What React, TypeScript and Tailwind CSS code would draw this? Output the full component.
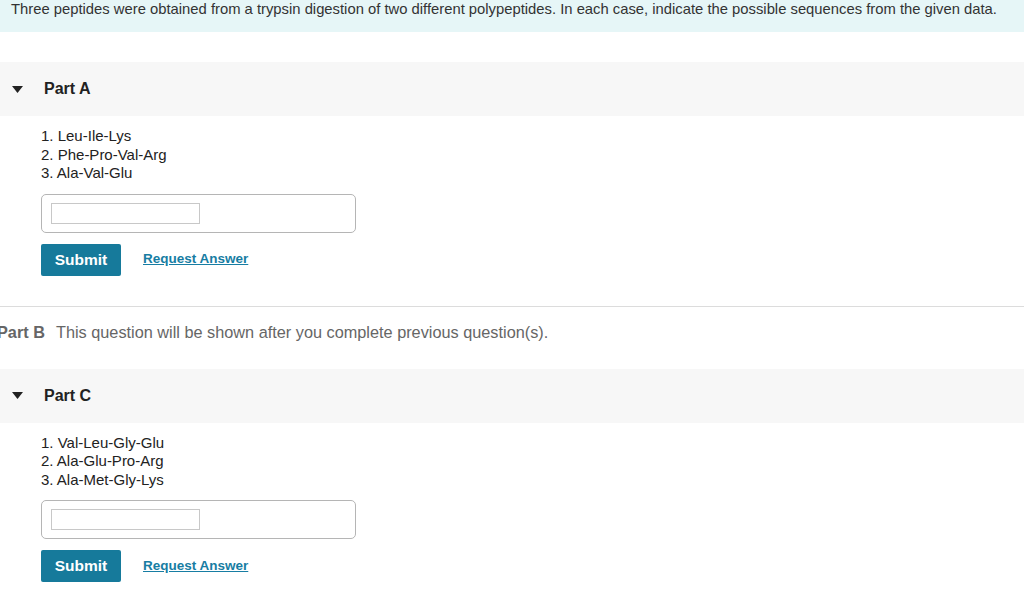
import React from "react";

const PARTS = {
  A: ["Leu-Ile-Lys", "Phe-Pro-Val-Arg", "Ala-Val-Glu"],
  C: ["Val-Leu-Gly-Glu", "Ala-Glu-Pro-Arg", "Ala-Met-Gly-Lys"],
};

function Caret() {
  return (
    <svg width="11" height="7" viewBox="0 0 11 7" className="block">
      <path d="M0 0 L11 0 L5.5 7 Z" fill="#222" />
    </svg>
  );
}

function PartHeader({ label }: { label: string }) {
  return (
    <div className="flex h-[54px] items-center bg-[#f7f7f7]">
      <div className="pl-[12px] pr-[21px]">
        <Caret />
      </div>
      <span className="text-[16px] font-bold text-[#222]">{label}</span>
    </div>
  );
}

function PartBody({ items }: { items: string[] }) {
  return (
    <div className="pl-[41px] pt-[11px]">
      <ol className="text-[15px] leading-[18.5px] text-[#222]">
        {items.map((it, i) => (
          <li key={it}>
            {i + 1}. {it}
          </li>
        ))}
      </ol>
      <div className="mt-[11px] h-[39px] w-[315px] rounded-[5px] border border-[#b5b5b5] pl-[9px] pt-[8px]">
        <input
          type="text"
          className="block h-[21px] w-[149px] border border-[#c8c8c8] bg-white outline-none"
        />
      </div>
      <div className="mt-[11px] flex items-center gap-[22px]">
        <button
          type="button"
          className="h-[32px] w-[80px] rounded-[2px] bg-[#167a9b] text-[15.5px] font-bold text-white"
        >
          Submit
        </button>
        <a href="#" className="text-[13.5px] font-bold text-[#177da3] underline">
          Request Answer
        </a>
      </div>
    </div>
  );
}

export default function App() {
  return (
    <div className="min-h-[607px] w-full bg-white font-['Liberation_Sans',Arial,sans-serif]">
      <div className="h-[32px] bg-[#e6f6f7] pl-[11px] text-[14.8px] leading-[18px] text-[#333]">
        Three peptides were obtained from a trypsin digestion of two different polypeptides. In each case,
        indicate the possible sequences from the given data.
      </div>

      <div className="mt-[30px]">
        <PartHeader label="Part A" />
        <PartBody items={PARTS.A} />
      </div>

      <div className="mt-[30px] h-[63px] border-t border-[#dcdcdc] pt-[16px] text-[16.3px] leading-[18px] text-[#666]">
        <span className="ml-[-3px] font-bold">Part B</span>
        <span className="ml-[11px]">This question will be shown after you complete previous question(s).</span>
      </div>

      <div>
        <PartHeader label="Part C" />
        <PartBody items={PARTS.C} />
      </div>
    </div>
  );
}
